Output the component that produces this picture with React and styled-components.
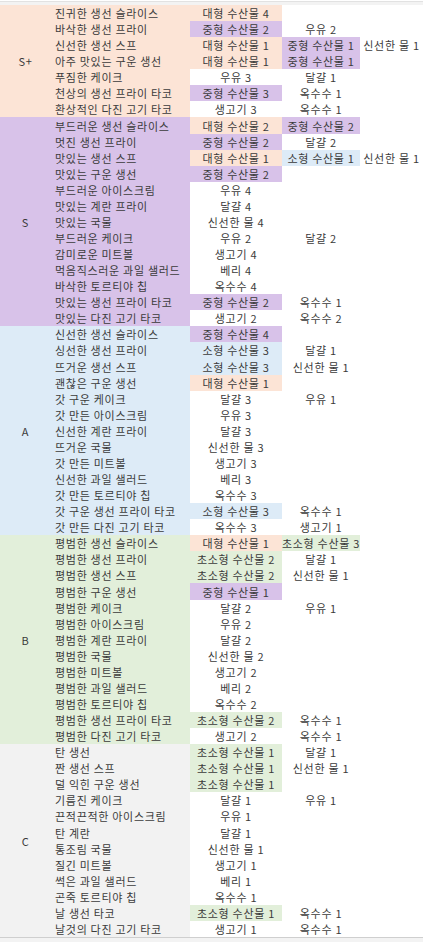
import React from 'react';
import styled, { createGlobalStyle } from 'styled-components';

const ROWS = 58;

const TIER_COLORS = {
  'S+': '#fce4d6',
  S: '#d8c2e9',
  A: '#ddebf7',
  B: '#e2efda',
  C: '#f2f2f2'
};

// fish size -> cell colour
const ingredientColor = (name) => {
  if (!name) return null;
  if (name.startsWith('대형')) return TIER_COLORS['S+'];
  if (name.startsWith('중형')) return TIER_COLORS.S;
  if (name.startsWith('소형')) return TIER_COLORS.A;
  if (name.startsWith('초소형')) return TIER_COLORS.B;
  return null;
};

const tiers = [
  {
    tier: 'S+',
    dishes: [
      ['진귀한 생선 슬라이스', '대형 수산물 4'],
      ['바삭한 생선 프라이', '중형 수산물 2', '우유 2'],
      ['신선한 생선 스프', '대형 수산물 1', '중형 수산물 1', '신선한 물 1'],
      ['아주 맛있는 구운 생선', '대형 수산물 1', '중형 수산물 1'],
      ['푸짐한 케이크', '우유 3', '달걀 1'],
      ['천상의 생선 프라이 타코', '중형 수산물 3', '옥수수 1'],
      ['환상적인 다진 고기 타코', '생고기 3', '옥수수 1']
    ]
  },
  {
    tier: 'S',
    dishes: [
      ['부드러운 생선 슬라이스', '대형 수산물 2', '중형 수산물 2'],
      ['멋진 생선 프라이', '중형 수산물 2', '달걀 2'],
      ['맛있는 생선 스프', '대형 수산물 1', '소형 수산물 1', '신선한 물 1'],
      ['맛있는 구운 생선', '중형 수산물 2'],
      ['부드러운 아이스크림', '우유 4'],
      ['맛있는 계란 프라이', '달걀 4'],
      ['맛있는 국물', '신선한 물 4'],
      ['부드러운 케이크', '우유 2', '달걀 2'],
      ['감미로운 미트볼', '생고기 4'],
      ['먹음직스러운 과일 샐러드', '베리 4'],
      ['바삭한 토르티야 칩', '옥수수 4'],
      ['맛있는 생선 프라이 타코', '중형 수산물 2', '옥수수 1'],
      ['맛있는 다진 고기 타코', '생고기 2', '옥수수 2']
    ]
  },
  {
    tier: 'A',
    dishes: [
      ['신선한 생선 슬라이스', '중형 수산물 4'],
      ['싱선한 생선 프라이', '소형 수산물 3', '달걀 1'],
      ['뜨거운 생선 스프', '소형 수산물 3', '신선한 물 1'],
      ['괜찮은 구운 생선', '대형 수산물 1'],
      ['갓 구운 케이크', '달걀 3', '우유 1'],
      ['갓 만든 아이스크림', '우유 3'],
      ['신선한 계란 프라이', '달걀 3'],
      ['뜨거운 국물', '신선한 물 3'],
      ['갓 만든 미트볼', '생고기 3'],
      ['신선한 과일 샐러드', '베리 3'],
      ['갓 만든 토르티야 칩', '옥수수 3'],
      ['갓 구운 생선 프라이 타코', '소형 수산물 3', '옥수수 1'],
      ['갓 만든 다진 고기 타코', '옥수수 3', '생고기 1']
    ]
  },
  {
    tier: 'B',
    dishes: [
      ['평범한 생선 슬라이스', '대형 수산물 1', '초소형 수산물 3'],
      ['평범한 생선 프라이', '초소형 수산물 2', '달걀 1'],
      ['평범한 생선 스프', '초소형 수산물 2', '신선한 물 1'],
      ['평범한 구운 생선', '중형 수산물 1'],
      ['평범한 케이크', '달걀 2', '우유 1'],
      ['평범한 아이스크림', '우유 2'],
      ['평범한 계란 프라이', '달걀 2'],
      ['평범한 국물', '신선한 물 2'],
      ['평범한 미트볼', '생고기 2'],
      ['평범한 과일 샐러드', '베리 2'],
      ['평범한 토르티야 칩', '옥수수 2'],
      ['평범한 생선 프라이 타코', '초소형 수산물 2', '옥수수 1'],
      ['평범한 다진 고기 타코', '생고기 2', '옥수수 1']
    ]
  },
  {
    tier: 'C',
    dishes: [
      ['탄 생선', '초소형 수산물 1', '달걀 1'],
      ['짠 생선 스프', '초소형 수산물 1', '신선한 물 1'],
      ['덜 익힌 구운 생선', '초소형 수산물 1'],
      ['기름진 케이크', '달걀 1', '우유 1'],
      ['끈적끈적한 아이스크림', '우유 1'],
      ['탄 계란', '달걀 1'],
      ['통조림 국물', '신선한 물 1'],
      ['질긴 미트볼', '생고기 1'],
      ['썩은 과일 샐러드', '베리 1'],
      ['곤죽 토르티야 칩', '옥수수 1'],
      ['날 생선 타코', '초소형 수산물 1', '옥수수 1'],
      ['날것의 다진 고기 타코', '생고기 1', '옥수수 1']
    ]
  }
];

const GlobalStyle = createGlobalStyle`
  html, body {
    margin: 0;
    padding: 0;
    background: #ffffff;
  }
  body {
    font-family: "Noto Sans CJK KR", "Noto Sans", sans-serif;
    color: #3b3b3b;
  }
`;

const Page = styled.div`
  width: 423px;
  height: 942px;
  overflow: hidden;
  display: flex;
  flex-direction: column;
`;

const Strip = styled.div`
  height: ${props => props.bottom ? '5px' : '3px'};
  flex-shrink: 0;
  background: #f3f3f3;
  border-top: 1px solid ${props => props.bottom ? '#cfcfcf' : '#e2e2e2'};
  margin-top: ${props => props.bottom ? '0' : '1px'};
`;

const Sheet = styled.div`
  height: 932px;
  flex-shrink: 0;
  display: grid;
  grid-template-columns: 52px 138px 92px 78px 63px;
  grid-template-rows: repeat(${ROWS}, 1fr);
  font-size: 11px;
  letter-spacing: 0.7px;
  white-space: nowrap;
`;

const TierCell = styled.div`
  grid-column: 1;
  grid-row: span ${props => props.span};
  background: ${props => props.color};
  display: flex;
  align-items: center;
  justify-content: center;
  padding-right: 1px;
`;

const NameCell = styled.div`
  grid-column: 2;
  background: ${props => props.color};
  display: flex;
  align-items: center;
  padding-left: 3px;
  overflow: hidden;
`;

const Cell = styled.div`
  background: ${props => props.color || 'transparent'};
  display: flex;
  align-items: center;
  justify-content: center;
  overflow: visible;
`;

const App = () => (
  <Page>
    <GlobalStyle />
    <Strip />
    <Sheet>
      {tiers.map(({ tier, dishes }) => (
        <React.Fragment key={tier}>
          <TierCell span={dishes.length} color={TIER_COLORS[tier]}>
            {tier}
          </TierCell>
          {dishes.map(([name, ...items]) => (
            <React.Fragment key={name}>
              <NameCell color={TIER_COLORS[tier]}>{name}</NameCell>
              {[0, 1, 2].map(i => (
                <Cell key={i} color={ingredientColor(items[i])}>
                  {items[i] || ''}
                </Cell>
              ))}
            </React.Fragment>
          ))}
        </React.Fragment>
      ))}
    </Sheet>
    <Strip bottom />
  </Page>
);

export default App;
